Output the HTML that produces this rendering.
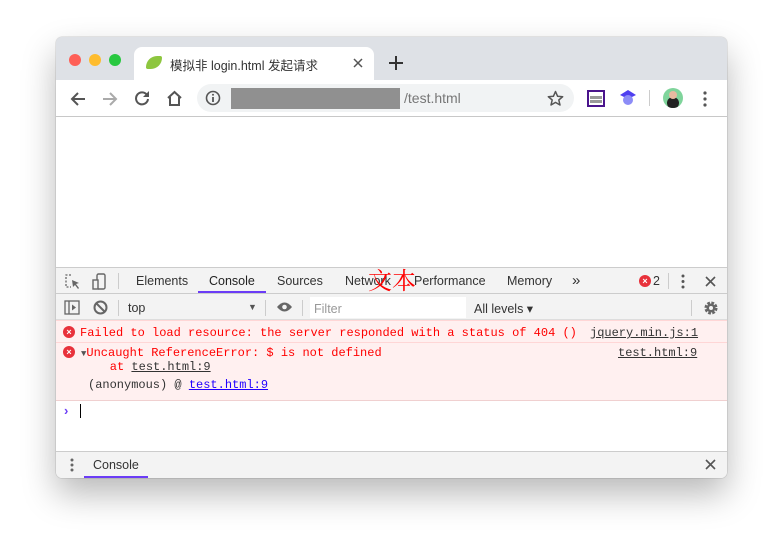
<!DOCTYPE html>
<html><head><meta charset="utf-8"><style>
*{box-sizing:border-box;margin:0;padding:0}
body{width:783px;height:553px;background:#fff;position:relative;overflow:hidden;font-family:"Liberation Sans","Noto Sans CJK SC",sans-serif}
.a{position:absolute}
.win{left:56px;top:37px;width:671px;height:441px;border-radius:6px;background:#fff;box-shadow:0 16px 34px rgba(0,0,0,.28),0 0 1px rgba(0,0,0,.5);overflow:hidden}
.mono{font-family:"Liberation Mono",monospace;font-size:12px}
.t{font-size:12.5px;color:#333}
.err{background:#fff0f0;border-top:1px solid #ffd6d6}
.x{width:12px;height:12px;border-radius:50%;background:#e8313b;color:#fff;font-size:9px;line-height:12px;text-align:center;font-weight:bold}
u{text-decoration:underline}
svg{position:absolute}
</style></head><body>
<div class="a win">
 <div class="a" style="left:0;top:0;width:671px;height:43px;background:#dee1e6"></div>
 <div class="a" style="left:13px;top:17px;width:12px;height:12px;border-radius:50%;background:#fe5f57"></div>
 <div class="a" style="left:33px;top:17px;width:12px;height:12px;border-radius:50%;background:#febc2e"></div>
 <div class="a" style="left:53px;top:17px;width:12px;height:12px;border-radius:50%;background:#28c840"></div>
 <div class="a" style="left:78px;top:10px;width:240px;height:34px;background:#fff;border-radius:8px 8px 0 0"></div>
 <div class="a" style="left:90px;top:19px;width:16px;height:13px;background:#8dc63f;border-radius:12px 2px 12px 2px"></div>
 <div class="a" style="left:114px;top:18px;font-size:12.5px;color:#333">模拟非 login.html 发起请求</div>
 <svg style="left:297px;top:21px" width="10" height="10"><path d="M1 1L9 9M9 1L1 9" stroke="#555" stroke-width="1.5"/></svg>
 <svg style="left:333px;top:19px" width="14" height="14"><path d="M7 0V14M0 7H14" stroke="#333" stroke-width="2"/></svg>
 <div class="a" style="left:0;top:43px;width:671px;height:37px;background:#fff;border-bottom:1px solid #c8c8c8"></div>
 <svg style="left:14px;top:54px" width="16" height="16"><path d="M15 8H2M8 2L2 8L8 14" stroke="#555" stroke-width="2" fill="none"/></svg>
 <svg style="left:46px;top:54px" width="16" height="16"><path d="M1 8H14M8 2L14 8L8 14" stroke="#aaa" stroke-width="2" fill="none"/></svg>
 <svg style="left:78px;top:53px" width="16" height="16"><path d="M13 5A6 6 0 1 0 14 9" stroke="#555" stroke-width="2" fill="none"/><path d="M15 1V7H9Z" fill="#555"/></svg>
 <svg style="left:110px;top:53px" width="17" height="17"><path d="M2 8L8.5 2L15 8M4 7V15H13V7" stroke="#555" stroke-width="2" fill="none"/></svg>
 <div class="a" style="left:141px;top:47px;width:377px;height:28px;background:#f1f3f4;border-radius:14px"></div>
 <svg style="left:149px;top:53px" width="16" height="16"><circle cx="8" cy="8" r="6.5" stroke="#555" stroke-width="1.6" fill="none"/><path d="M8 7V12" stroke="#555" stroke-width="1.8"/><circle cx="8" cy="4.8" r="1" fill="#555"/></svg>
 <div class="a" style="left:175px;top:51px;width:169px;height:21px;background:#909090"></div>
 <div class="a" style="left:348px;top:53px;font-size:14px;color:#777">/test.html</div>
 <svg style="left:491px;top:53px" width="17" height="17"><path d="M8.5 1.5L10.6 6.3L15.7 6.7L11.8 10L13 15L8.5 12.4L4 15L5.2 10L1.3 6.7L6.4 6.3Z" stroke="#555" stroke-width="1.5" fill="none" stroke-linejoin="round"/></svg>
 <svg style="left:531px;top:53px" width="18" height="17"><rect x="1" y="1" width="16" height="15" fill="#fff" stroke="#4a148c" stroke-width="2"/><rect x="3" y="6" width="12" height="3" fill="#999"/><rect x="3" y="10" width="12" height="3" fill="#999"/></svg>
 <svg style="left:563px;top:52px" width="18" height="18"><path d="M9 1L17 6L9 10L1 6Z" fill="#4f3ff0"/><circle cx="9" cy="11" r="5" fill="#8c8cf7"/></svg>
 <div class="a" style="left:593px;top:53px;width:1px;height:16px;background:#ccc"></div>
 <div class="a" style="left:607px;top:51px;width:20px;height:20px;border-radius:50%;background:#7fd49b;overflow:hidden"><div class="a" style="left:4px;top:9px;width:12px;height:12px;border-radius:50%;background:#222"></div><div class="a" style="left:6px;top:3px;width:8px;height:8px;border-radius:50%;background:#e8b9a0"></div></div>
 <svg style="left:647px;top:54px" width="4" height="16"><circle cx="2" cy="2" r="1.6" fill="#555"/><circle cx="2" cy="8" r="1.6" fill="#555"/><circle cx="2" cy="14" r="1.6" fill="#555"/></svg>

 <div class="a" style="left:0;top:230px;width:671px;height:27px;background:#f3f3f3;border-top:1px solid #ccc;border-bottom:1px solid #ccc"></div>
 <svg style="left:9px;top:237px" width="16" height="16"><path d="M6 1H1V13H6" stroke="#666" stroke-width="1.3" fill="none" stroke-dasharray="2 1.5"/><path d="M7 6L14 9L11 10L14 14L13 15L10 11L8 13Z" fill="#666"/></svg>
 <svg style="left:36px;top:236px" width="14" height="17"><rect x="5" y="1" width="8" height="15" rx="1.5" stroke="#666" stroke-width="1.4" fill="none"/><rect x="1" y="7" width="5" height="9" stroke="#666" stroke-width="1.4" fill="#f3f3f3"/></svg>
 <div class="a" style="left:62px;top:236px;width:1px;height:16px;background:#ccc"></div>
 <div class="a t" style="left:80px;top:237px">Elements</div>
 <div class="a t" style="left:153px;top:237px;color:#222">Console</div>
 <div class="a" style="left:142px;top:254px;width:68px;height:2px;background:#6b3cf6"></div>
 <div class="a t" style="left:221px;top:237px">Sources</div>
 <div class="a t" style="left:289px;top:237px">Network</div>
 <div class="a t" style="left:358px;top:237px">Performance</div>
 <div class="a t" style="left:451px;top:237px">Memory</div>
 <div class="a t" style="left:516px;top:235px;font-size:15px">»</div>
 <div class="a x" style="left:583px;top:238px">×</div>
 <div class="a t" style="left:597px;top:237px">2</div>
 <div class="a" style="left:612px;top:236px;width:1px;height:16px;background:#ccc"></div>
 <svg style="left:625px;top:237px" width="4" height="16"><circle cx="2" cy="2" r="1.5" fill="#555"/><circle cx="2" cy="7.5" r="1.5" fill="#555"/><circle cx="2" cy="13" r="1.5" fill="#555"/></svg>
 <svg style="left:649px;top:239px" width="11" height="11"><path d="M1 1L10 10M10 1L1 10" stroke="#555" stroke-width="1.6"/></svg>
 <div class="a" style="left:312px;top:224px;font-size:24px;color:#f00;font-family:'Noto Serif CJK SC',serif">文本</div>

 <div class="a" style="left:0;top:257px;width:671px;height:26px;background:#f3f3f3;border-bottom:1px solid #ddd"></div>
 <svg style="left:8px;top:263px" width="16" height="15"><rect x="1" y="1" width="14" height="13" stroke="#666" stroke-width="1.3" fill="none"/><path d="M5 1V14" stroke="#666" stroke-width="1.3"/><path d="M8 4.5L12 7.5L8 10.5Z" fill="#666"/></svg>
 <svg style="left:37px;top:263px" width="15" height="15"><circle cx="7.5" cy="7.5" r="6" stroke="#666" stroke-width="2" fill="none"/><path d="M3.5 3.5L11.5 11.5" stroke="#666" stroke-width="2"/></svg>
 <div class="a" style="left:62px;top:263px;width:1px;height:16px;background:#ccc"></div>
 <div class="a t" style="left:72px;top:264px">top</div>
 <div class="a" style="left:192px;top:265px;font-size:9px;color:#555">▼</div>
 <div class="a" style="left:209px;top:263px;width:1px;height:16px;background:#ccc"></div>
 <svg style="left:220px;top:264px" width="17" height="12"><path d="M1 6Q8.5 -3 16 6Q8.5 15 1 6Z" fill="#666"/><circle cx="8.5" cy="6" r="2.3" fill="#f3f3f3"/></svg>
 <div class="a" style="left:246px;top:263px;width:1px;height:16px;background:#ccc"></div>
 <div class="a" style="left:254px;top:260px;width:156px;height:21px;background:#fff"></div>
 <div class="a t" style="left:258px;top:265px;color:#999">Filter</div>
 <div class="a t" style="left:418px;top:264px">All levels ▾</div>
 <div class="a" style="left:635px;top:263px;width:1px;height:16px;background:#ccc"></div>
 <svg style="left:647px;top:263px" width="16" height="16"><circle cx="8" cy="8" r="4.8" fill="none" stroke="#666" stroke-width="3.5" stroke-dasharray="2.5 1.3"/><circle cx="8" cy="8" r="4.5" fill="#666"/><circle cx="8" cy="8" r="2" fill="#f3f3f3"/></svg>

 <div class="a err" style="left:0;top:283px;width:671px;height:22px"></div>
 <div class="a x" style="left:7px;top:289px">×</div>
 <div class="a mono" style="left:24px;top:289px;color:#f00">Failed to load resource: the server responded with a status of 404 ()</div>
 <div class="a mono" style="left:534px;top:289px;color:#333"><u>jquery.min.js:1</u></div>
 <div class="a err" style="left:0;top:305px;width:671px;height:58px"></div>
 <div class="a x" style="left:7px;top:309px">×</div>
 <div class="a mono" style="left:25px;top:309px;color:#f00"><span style="color:#555;font-size:9px">▼</span>Uncaught ReferenceError: $ is not defined<br>&nbsp;&nbsp;&nbsp;&nbsp;at <u style="color:#333">test.html:9</u></div>
 <div class="a mono" style="left:562px;top:309px;color:#333"><u>test.html:9</u></div>
 <div class="a mono" style="left:32px;top:341px;color:#333">(anonymous) @ <u style="color:#2200ff">test.html:9</u></div>
 <div class="a" style="left:0;top:363px;width:671px;height:1px;background:#f0d0d0"></div>
 <div class="a" style="left:8px;top:366px;color:#6b3cf6;font-size:13px;font-weight:bold">›</div>
 <div class="a" style="left:24px;top:367px;width:1px;height:14px;background:#000"></div>

 <div class="a" style="left:0;top:414px;width:671px;height:27px;background:#f3f3f3;border-top:1px solid #ccc"></div>
 <svg style="left:14px;top:421px" width="4" height="14"><circle cx="2" cy="2" r="1.5" fill="#666"/><circle cx="2" cy="7" r="1.5" fill="#666"/><circle cx="2" cy="12" r="1.5" fill="#666"/></svg>
 <div class="a t" style="left:37px;top:421px">Console</div>
 <div class="a" style="left:28px;top:439px;width:64px;height:2px;background:#6b3cf6"></div>
 <svg style="left:649px;top:422px" width="11" height="11"><path d="M1 1L10 10M10 1L1 10" stroke="#555" stroke-width="1.6"/></svg>
</div>
</body></html>
